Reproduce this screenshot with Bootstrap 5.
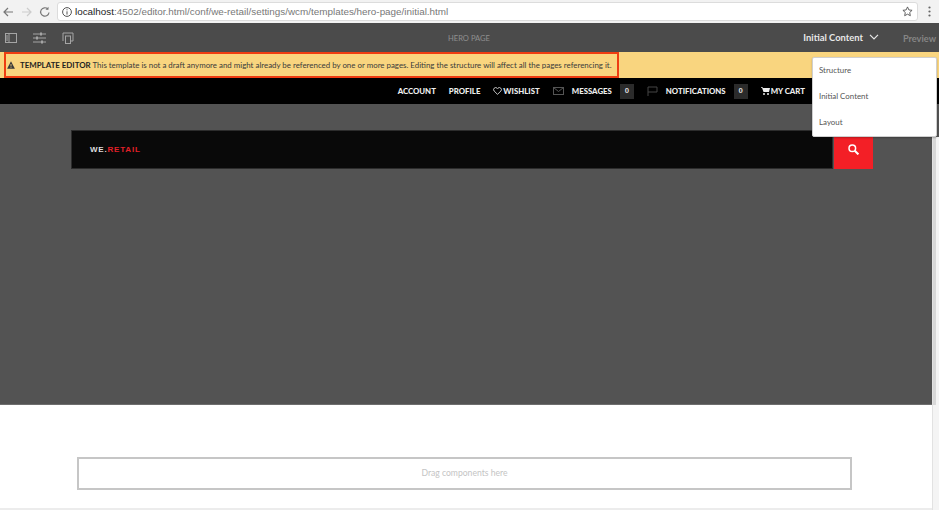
<!DOCTYPE html>
<html lang="en">
<head>
<meta charset="utf-8">
<title>Hero Page</title>
<link href="https://cdn.jsdelivr.net/npm/bootstrap@5.3.0/dist/css/bootstrap.min.css" rel="stylesheet">
<style>
html,body{height:510px;overflow:hidden;background:#fff}
body{font-family:Lato,"Open Sans",sans-serif;position:relative}
.chrome-bar{height:23px;background:#f2f2f2;padding:0 8px 0 0}
.chrome-nav{width:57px;padding:0 6px 0 2px}
.chrome-url{height:19px;background:#fff;border:1px solid #dcdcdc;border-radius:3px;width:861px;padding:0 4px;font:9.9px/17px "Liberation Sans",sans-serif;color:#777}
.chrome-url b{font-weight:400;color:#222}
.url-text{margin-left:3px}
.editor-bar{height:29px;background:#4b4b4b;padding:0 3px 0 5px}
.tool-icons{gap:16px;width:200px}
.bar-title{font-size:7.6px;color:#8f8f8f;flex:1;text-align:center;margin-right:3px;padding-top:2px}
.bar-right{width:200px}
.mode-btn{font-size:9.4px;font-weight:700;color:#e8e8e8;margin-right:24px;gap:6px}
.mode-label,.preview-btn{padding-top:2px}
.preview-btn{font-size:9.2px;font-weight:700;color:#858585}
.alert-strip{height:26px;background:#f9d57f}
.alert-box{width:615px;height:26px;margin-left:4px;border:2px solid #ee3d12;padding-left:1px;font-size:7.9px;color:#3a3a3a;gap:5px;white-space:nowrap}
.alert-box span{padding-top:2px}
.alert-box b{color:#222}
.alert-box svg{flex:none}
.site-nav{height:26px;background:#000;padding-right:134px;color:#eee;font-size:7.8px;font-weight:900}
.site-nav>span{white-space:nowrap}
.site-nav .nav-text{padding-top:2px}
.gap-a{margin-right:13px}
.gap-b{margin-right:8px}
.heart-gap{margin-right:1px}
.count-box{width:14px;height:15px;background:#2b2b2b;display:flex;align-items:center;justify-content:center;color:#ddd;font-family:"Liberation Sans",sans-serif;font-weight:700}
.hero-area{height:301px;background:#535353;border-bottom:1px solid #6e6e6e;padding:26px 66px 0 71px}
.search-strip{height:39px;background:#090909;border:1px solid #2c2c2c;padding-left:18px;font-size:8px;font-weight:700;letter-spacing:.8px;color:#ddd;font-family:"Liberation Sans",sans-serif}
.search-strip i{font-style:normal;color:#e32028}
.search-go{width:39px;height:39px;background:#f31f26;margin-left:1px}
.drop-wrap{padding:0 87px 0 77px;margin-top:52px}
.drop-zone{height:33px;border:2px solid #c6c6c6;font-size:8.6px;color:#c4c4c4}
.page-foot{height:2px;margin-top:18px;background:#ececec}
.mode-menu{position:absolute;left:812px;top:57px;width:125px;height:80px;background:#fff;border:1px solid #cfcfcf;border-radius:2px;font-size:7.9px;color:#555;padding:0 6px;box-shadow:0 1px 2px rgba(0,0,0,.25)}
.mode-menu div{height:26px;line-height:24px}
.page-edge{position:absolute;left:932px;top:137px;width:7px;height:373px;background:#f4f4f4;border-left:1px solid #e2e2e2}
.hero-edge{position:absolute;left:933px;top:137px;width:3px;height:268px;background:#d8d8d8}
</style>
</head>
<body>
<div class="chrome-bar d-flex align-items-center">
  <div class="chrome-nav d-flex align-items-center justify-content-between">
    <svg width="12" height="12" viewBox="0 0 12 12" fill="none" stroke="#777" stroke-width="1.2"><path d="M11 6H2M6 2 2 6l4 4"/></svg>
    <svg width="12" height="12" viewBox="0 0 12 12" fill="none" stroke="#ccc" stroke-width="1.2"><path d="M1 6h9M6 2l4 4-4 4"/></svg>
    <svg width="12" height="12" viewBox="0 0 12 12" fill="none" stroke="#777" stroke-width="1.2"><path d="M10 6.500A4.200 4.200 0 1 1 8.800 3"/><path d="M9.500 .8v3h-3" fill="#777" stroke="none"/></svg>
  </div>
  <div class="chrome-url d-flex align-items-center">
    <svg width="10" height="10" viewBox="0 0 10 10" fill="none" stroke="#555"><circle cx="5" cy="5" r="4.400"/><path d="M5 4.300V7.600M5 2.300v1"/></svg>
    <span class="url-text flex-grow-1"><b>localhost</b>:4502/editor.html/conf/we-retail/settings/wcm/templates/hero-page/initial.html</span>
    <svg width="11" height="11" viewBox="0 0 12 12" fill="none" stroke="#555"><path d="m6 1 1.500 3.300 3.500.4-2.600 2.400.7 3.500L6 8.900 2.900 10.600l.7-3.500L1 4.700l3.500-.4z"/></svg>
  </div>
  <svg class="ms-auto" width="3" height="11" viewBox="0 0 3 11" fill="#666"><circle cx="1.500" cy="1.500" r="1.100"/><circle cx="1.500" cy="5.500" r="1.100"/><circle cx="1.500" cy="9.500" r="1.100"/></svg>
</div>

<div class="editor-bar d-flex align-items-center">
  <div class="tool-icons d-flex align-items-center">
    <svg width="12" height="10" viewBox="0 0 12 10" fill="none" stroke="#a5a5a5"><rect x=".5" y=".5" width="11" height="9"/><path d="M4 .5v9M1 3h2M1 5h2M1 7h2"/></svg>
    <svg width="13" height="12" viewBox="0 0 13 12" fill="none" stroke="#a5a5a5"><path d="M0 2h13M0 6h13M0 10h13"/><path d="M8 .5v3M4 4.500v3M9 8.500v3" stroke-width="2"/></svg>
    <svg width="12" height="12" viewBox="0 0 12 12" fill="none" stroke="#a5a5a5"><path d="M1 9V1h10v8H9"/><rect x="3.500" y="4" width="5" height="7.500"/></svg>
  </div>
  <div class="bar-title">HERO PAGE</div>
  <div class="bar-right d-flex align-items-center justify-content-end">
    <span class="mode-btn d-flex align-items-center"><span class="mode-label">Initial Content</span> <svg width="10" height="6" viewBox="0 0 10 6" fill="none" stroke="#e8e8e8" stroke-width="1.200"><path d="m1 .8 4 4 4-4"/></svg></span>
    <span class="preview-btn">Preview</span>
  </div>
</div>

<div class="alert-strip">
  <div class="alert-box d-flex align-items-center">
    <svg width="8" height="8" viewBox="0 0 8 8"><path d="M4 .3 7.900 7.700H.1z" fill="#3a3a3a"/><path d="M4 3v2.500M4 6v.8" stroke="#f9d57f" stroke-width=".8"/></svg>
    <span><b>TEMPLATE EDITOR</b> This template is not a draft anymore and might already be referenced by one or more pages. Editing the structure will affect all the pages referencing it.</span>
  </div>
</div>

<nav class="site-nav d-flex align-items-center justify-content-end">
  <span class="nav-text gap-a">ACCOUNT</span>
  <span class="nav-text gap-a">PROFILE</span>
  <span class="d-flex align-items-center gap-a"><svg class="heart-gap" width="9" height="8" viewBox="0 0 10 9" fill="none" stroke="#ddd"><path d="M5 8.300 1.200 4.500a2.300 2.300 0 0 1 3.300-3.200l.5.500.5-.5a2.300 2.300 0 0 1 3.300 3.200z"/></svg><span class="nav-text">WISHLIST</span></span>
  <svg class="gap-b" width="11" height="8" viewBox="0 0 11 8" fill="none" stroke="#555"><rect x=".5" y=".5" width="10" height="7"/><path d="m.5.500 5 4 5-4"/></svg>
  <span class="nav-text gap-b">MESSAGES</span>
  <span class="count-box gap-a">0</span>
  <svg class="gap-b" width="11" height="10" viewBox="0 0 11 10" fill="none" stroke="#444"><path d="M1 10V1h9v5H1"/></svg>
  <span class="nav-text gap-b">NOTIFICATIONS</span>
  <span class="count-box gap-a">0</span>
  <span class="d-flex align-items-center"><svg class="heart-gap" width="9" height="8" viewBox="0 0 9 8" fill="#eee"><path d="M0 0h1.500l.3 1H9L8 5H2.500L1 .8H0z"/><circle cx="3" cy="7" r="1"/><circle cx="7" cy="7" r="1"/></svg><span class="nav-text">MY CART</span></span>
</nav>

<section class="hero-area">
  <div class="d-flex">
    <div class="search-strip flex-grow-1 d-flex align-items-center"><span>WE.<i>RETAIL</i></span></div>
    <div class="search-go d-flex align-items-center justify-content-center">
      <svg width="11" height="11" viewBox="0 0 11 11" fill="none" stroke="#fff" stroke-width="1.500"><circle cx="4.300" cy="4.300" r="3.300"/><path d="m6.800 6.800 3.600 3.600" stroke-width="2"/></svg>
    </div>
  </div>
</section>

<div class="drop-wrap">
  <div class="drop-zone d-flex align-items-center justify-content-center">Drag components here</div>
</div>
<div class="page-foot"></div>

<div class="page-edge"></div>
<div class="hero-edge"></div>
<div class="mode-menu">
  <div>Structure</div>
  <div>Initial Content</div>
  <div>Layout</div>
</div>
<script src="https://cdn.jsdelivr.net/npm/bootstrap@5.3.0/dist/js/bootstrap.bundle.min.js"></script>
</body>
</html>
